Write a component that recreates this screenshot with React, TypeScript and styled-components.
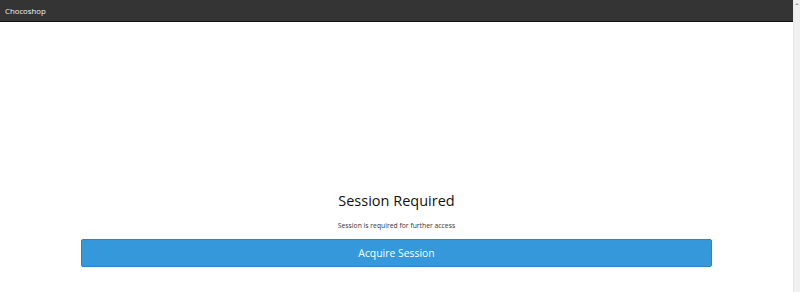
import styled, { createGlobalStyle } from "styled-components";

const GlobalStyle = createGlobalStyle`
  html, body {
    margin: 0;
    height: 100%;
    overflow: hidden;
  }
  body {
    background: #ffffff;
    font-family: "Open Sans", "Noto Sans", sans-serif;
    color: #111111;
  }
`;

const Frame = styled.div`
  display: flex;
  height: 100vh;
`;

const Page = styled.div`
  flex: 1;
  min-width: 0;
`;

const ScrollTrack = styled.div`
  width: 7px;
  background: #f0f0f0;
  border-left: 1px solid #e8e8e8;
  display: flex;
  justify-content: center;
  padding-top: 3px;
  box-sizing: border-box;
`;

const ScrollArrow = styled.span`
  width: 0;
  height: 0;
  border-left: 2px solid transparent;
  border-right: 2px solid transparent;
  border-bottom: 2px solid #a0a0a0;
`;

const Navbar = styled.header`
  height: 21px;
  background: #343434;
  border-bottom: 1px solid #111111;
  display: flex;
  align-items: center;
  padding: 0 5px;
`;

const Brand = styled.span`
  color: #f2f2f2;
  font-size: 7.8px;
`;

const Main = styled.main`
  display: flex;
  flex-direction: column;
  align-items: center;
  padding: 168px 0 0;
`;

const Title = styled.h2`
  margin: 0;
  font-size: 14.5px;
  font-weight: 400;
  line-height: 22px;
  color: #111111;
`;

const Hint = styled.p`
  margin: 9px 0 0;
  font-size: 6.8px;
  line-height: 10px;
  color: #333333;
`;

const Button = styled.button`
  margin-top: 8px;
  width: 631px;
  height: 28px;
  background: #3498db;
  border: 1px solid #2a84c6;
  border-radius: 2px;
  color: #ffffff;
  font-family: inherit;
  font-size: 10.4px;
  cursor: pointer;
`;

export default function App() {
  return (
    <>
      <GlobalStyle />
      <Frame>
        <Page>
          <Navbar>
            <Brand>Chocoshop</Brand>
          </Navbar>
          <Main>
            <Title>Session Required</Title>
            <Hint>Session is required for further access</Hint>
            <Button>Acquire Session</Button>
          </Main>
        </Page>
        <ScrollTrack>
          <ScrollArrow />
        </ScrollTrack>
      </Frame>
    </>
  );
}
